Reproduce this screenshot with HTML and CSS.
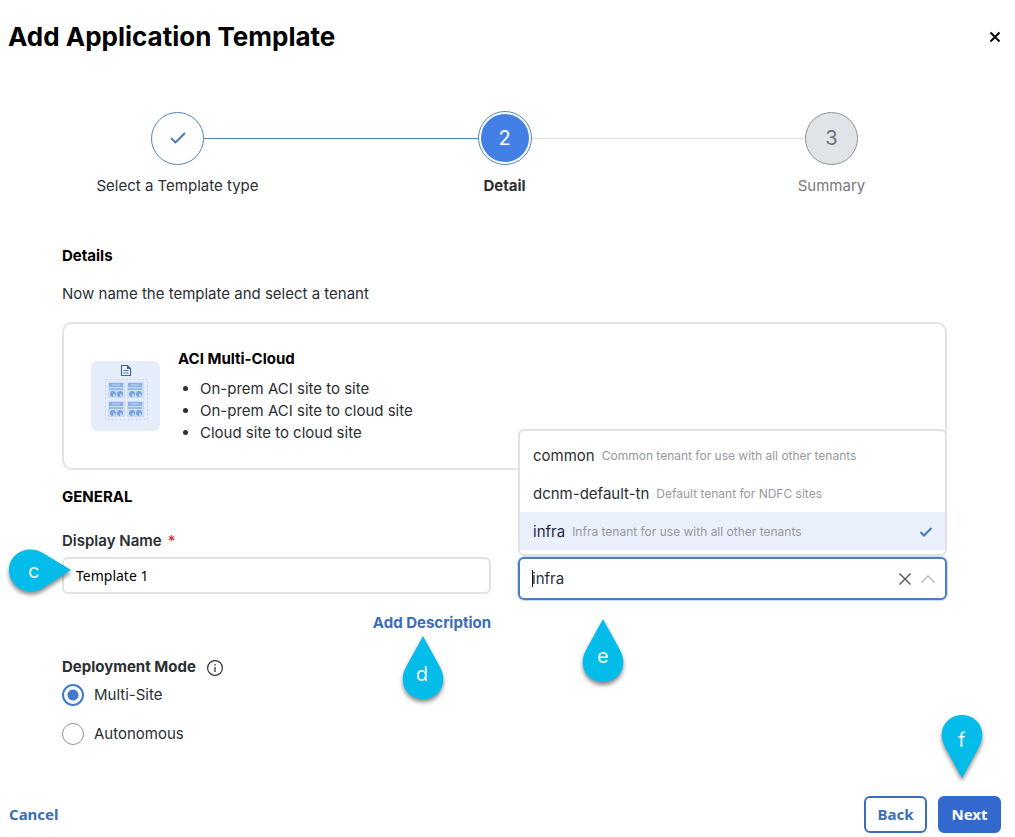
FILE: index.html
```html
<!DOCTYPE html>
<html lang="en">
<head>
<meta charset="utf-8">
<meta name="viewport" content="width=device-width, initial-scale=1">
<title>Add Application Template</title>
<link rel="stylesheet" href="styles.css">
</head>
<body class="page">
<header class="header">
  <h1 class="title">Add Application Template</h1>
  <button class="icon-button" type="button" aria-label="Close">
    <svg width="12" height="12" viewBox="0 0 12 12"><path d="M1.500 1.500l9 9M10.500 1.500l-9 9" stroke="#000" stroke-width="2" fill="none"/></svg>
  </button>
</header>

<ol class="stepper">
  <li class="step step-done">
    <div class="marker-row"><span class="marker"><svg width="18" height="14" viewBox="0 0 18 14"><path d="M2 7l4.500 4.500L16 2" stroke="#4376bd" stroke-width="1.800" fill="none"/></svg></span></div>
    <span class="step-label">Select a Template type</span>
  </li>
  <li class="step step-active" aria-current="step">
    <div class="marker-row"><span class="marker"><span class="marker-fill">2</span></span></div>
    <span class="step-label">Detail</span>
  </li>
  <li class="step step-next">
    <div class="marker-row"><span class="marker">3</span></div>
    <span class="step-label">Summary</span>
  </li>
</ol>

<main class="content">
  <h2 class="heading">Details</h2>
  <p class="intro">Now name the template and select a tenant</p>

  <section class="card">
    <svg class="card-art" width="69" height="70" viewBox="0 0 69 70" aria-hidden="true">
      <defs>
        <g id="rack">
          <rect width="17" height="16" fill="#cbdcf5"/>
          <rect x="1" y="1" width="14" height="4" fill="#8db0e5"/>
          <path d="M4 3h8" stroke="#c0d5f4"/>
          <rect x="1" y="6" width="14" height="2" fill="#9bbbea"/>
          <circle cx="5" cy="12" r="3" fill="#7ba2dc"/>
          <circle cx="12" cy="12" r="3" fill="#7ba2dc"/>
          <path d="M5 12h2v3H5zM12 12h2v3h-2z" fill="#b7cff1"/>
        </g>
      </defs>
      <rect width="69" height="70" rx="7" fill="#e5edfa"/>
      <rect x="14.500" y="18.500" width="42" height="40" fill="none" stroke="#c6d4eb" stroke-dasharray="2 2"/>
      <use href="#rack" x="17" y="21"/><use href="#rack" x="36" y="21"/>
      <use href="#rack" x="17" y="40"/><use href="#rack" x="36" y="40"/>
      <path d="M30.500 4.500h6l3 3v7h-9zM36.500 4.500v3h3" fill="#eef4fd" stroke="#41669d" stroke-width="1.200"/>
      <path d="M32.500 9.500h5M32.500 12h5" stroke="#41669d" stroke-width="1.200"/>
    </svg>
    <div class="card-body">
      <h3 class="card-title">ACI Multi-Cloud</h3>
      <ul class="card-list">
        <li>On-prem ACI site to site</li>
        <li>On-prem ACI site to cloud site</li>
        <li>Cloud site to cloud site</li>
      </ul>
    </div>
  </section>

  <h2 class="heading heading-general">GENERAL</h2>

  <form class="form">
    <div class="field">
      <label class="label" for="display-name">Display Name <span class="required">*</span></label>
      <div class="input-wrap">
        <input class="text-input" id="display-name" type="text" value="Template 1" required>
        <svg class="pin pin-c" width="72" height="54" viewBox="0 0 72 54"><path d="M65 22L37 5C22-4 3 5 3 22s19 27 34 18z" fill="#04bce9"/><text x="28" y="30" text-anchor="middle">c</text></svg>
      </div>
      <div class="link-wrap">
        <a class="link" href="#description">Add Description</a>
        <svg class="pin pin-d" width="54" height="72" viewBox="0 0 54 72"><use href="#drop"/><text x="26" y="47" text-anchor="middle">d</text></svg>
      </div>
    </div>

    <div class="field field-tenant">
      <div class="combo">
        <input class="combo-input" type="text" role="combobox" aria-label="Tenant" aria-expanded="true" aria-controls="tenant-list" value="infra">
        <span class="caret"></span>
        <button class="icon-button" type="button" aria-label="Clear tenant"><svg width="14" height="14" viewBox="0 0 14 14"><path d="M1.500 1.500l11 11M12.500 1.500l-11 11" stroke="#555" stroke-width="1.400" fill="none"/></svg></button>
        <button class="icon-button" type="button" aria-label="Close tenant list"><svg width="16" height="10" viewBox="0 0 16 10"><path d="M1.500 8.500L8 2l6.500 6.500" stroke="#bbb" stroke-width="1.400" fill="none"/></svg></button>
        <ul class="options" id="tenant-list" role="listbox" aria-label="Tenants">
          <li class="option" role="option" aria-selected="false">common <small class="hint">Common tenant for use with all other tenants</small></li>
          <li class="option" role="option" aria-selected="false">dcnm-default-tn <small class="hint">Default tenant for NDFC sites</small></li>
          <li class="option option-selected" role="option" aria-selected="true">infra <small class="hint">Infra tenant for use with all other tenants</small>
            <svg class="option-check" width="14" height="12" viewBox="0 0 14 12"><path d="M1.500 6l3.500 3.500L12.500 2" stroke="#3f75c6" stroke-width="2" fill="none"/></svg></li>
        </ul>
        <svg class="pin pin-e" width="54" height="72" viewBox="0 0 54 72"><path id="drop" d="M27 2L44 33C53 50 42 65 27 65S1 50 10 33z" fill="#04bce9"/><text x="27" y="46" text-anchor="middle">e</text></svg>
      </div>
    </div>

    <fieldset class="modes">
      <legend class="label mode-legend">Deployment Mode
        <svg class="info" width="18" height="18" viewBox="0 0 18 18"><circle cx="9" cy="9" r="7.400" fill="none" stroke="#333" stroke-width="1.200"/><path d="M9 8v5M9 5v1.500" stroke="#333" stroke-width="1.300"/></svg>
      </legend>
      <label class="mode"><input class="radio" type="radio" name="mode" checked>Multi-Site</label>
      <label class="mode"><input class="radio" type="radio" name="mode">Autonomous</label>
    </fieldset>
  </form>
</main>

<footer class="footer">
  <button class="button button-text" type="button">Cancel</button>
  <button class="button button-outline" type="button">Back</button>
  <div class="next-wrap">
    <button class="button button-primary" type="button">Next</button>
    <svg class="pin pin-f" width="54" height="72" viewBox="0 0 54 72"><use href="#drop" transform="matrix(1 0 0 -1 0 67)"/><text x="27" y="34" text-anchor="middle">f</text></svg>
  </div>
</footer>
</body>
</html>
```
FILE: styles.css
```css
* { box-sizing: border-box; }

.page {
  display: flex;
  flex-direction: column;
  min-height: 100vh;
  margin: 0;
  background: #fff;
  color: #2b2f33;
  font: 15px/22px Inter, "Liberation Sans", sans-serif;
}

.header {
  display: flex;
  align-items: center;
  justify-content: space-between;
  padding: 20px 14px 0 8px;
}

.title { margin: 0; color: #000; font-size: 26px; line-height: 34px; font-weight: 700; }

.icon-button {
  display: flex;
  padding: 0;
  border: 0;
  background: none;
  cursor: pointer;
}

.stepper {
  display: grid;
  grid-template-columns: repeat(3, 1fr);
  margin: 57px 20px 0 14px;
  padding: 0;
  list-style: none;
  text-align: center;
}

.marker-row { display: flex; align-items: center; height: 54px; }
.marker-row::before, .marker-row::after { content: ""; flex: 1; border-top: 1px solid transparent; }
.step-done .marker-row::after, .step-active .marker-row::before { border-color: #5283bd; }
.step-active .marker-row::after, .step-next .marker-row::before { border-color: #dedfe1; }

.marker {
  display: flex;
  align-items: center;
  justify-content: center;
  width: 53px;
  height: 53px;
  border: 1px solid #5283bd;
  border-radius: 50%;
  font-size: 20px;
}
.step-active .marker { width: 54px; height: 54px; }
.marker-fill { width: 48px; border-radius: 50%; background: #437fe4; color: #fff; line-height: 48px; }
.step-next .marker { border-color: #919295; background: #e0e3e8; color: #6f7276; }
.step-label { display: block; margin-top: 10px; }
.step-active .step-label { font-weight: 700; }
.step-next .step-label { color: #777a7e; }

.content { padding: 47px 68px 24px 62px; }
.heading, .card-title { margin: 0; color: #000; font-size: 15px; line-height: 24px; font-weight: 700; }
.heading-general { margin-top: 15px; }
.intro { margin: 14px 0 16px; line-height: 24px; }

.card {
  display: flex;
  align-items: center;
  gap: 18px;
  padding: 24px 27px;
  border: 2px solid #e2e3e6;
  border-radius: 10px;
}
.card-title { line-height: 22px; }
.card-list { margin: 8px 0 0; padding-left: 22px; }

.form {
  display: grid;
  grid-template-columns: 1fr 1fr;
  column-gap: 27px;
  margin-top: 21px;
}
.label { display: block; font-weight: 600; }
.required { margin-left: 2px; color: #d23b38; }
.input-wrap, .link-wrap, .combo, .next-wrap { position: relative; }
.input-wrap { margin-top: 5px; }
.field-tenant { padding-top: 27px; }

.text-input {
  display: block;
  width: 100%;
  height: 37px;
  padding: 0 12px;
  border: 2px solid #e1e2e4;
  border-radius: 6px;
  color: #000;
  font: 14px "Noto Sans", sans-serif;
}

.link-wrap { width: max-content; margin: 18px 0 0 auto; }
.link { display: block; color: #3a6dba; font-weight: 700; text-decoration: none; }

.combo {
  display: flex;
  align-items: center;
  gap: 8px;
  height: 43px;
  padding: 0 9px 0 12px;
  border: 2px solid #4f7ebd;
  border-radius: 6px;
  box-shadow: 0 0 0 1px #c9dcf7;
}
.combo-input {
  flex: 1;
  min-width: 0;
  padding: 0;
  border: 0;
  outline: 0;
  background: none;
  color: #2b2f33;
  font: inherit;
}
.caret { position: absolute; left: 12px; top: 11px; width: 1px; height: 17px; background: #111; }

.options {
  position: absolute;
  left: -2px;
  right: -2px;
  bottom: 42px;
  margin: 0;
  padding: 5px 0 4px;
  border: 2px solid #e1e2e5;
  border-radius: 6px;
  background: #fff;
  list-style: none;
}
.option { display: flex; align-items: center; gap: 7px; padding: 9px 12px 7px 13px; }
.option-selected { background: #ebf1fc; color: #1d2b42; }
.hint { color: #96999d; font-size: 12px; }
.option-check { margin-left: auto; }

.modes { grid-column: 1 / -1; margin: 22px 0 0; padding: 0; border: 0; }
.mode-legend { display: flex; align-items: center; gap: 10px; padding: 0; font-weight: 700; }
.info { margin-top: 2px; }
.mode { display: flex; align-items: center; gap: 10px; width: max-content; margin-top: 6px; }
.mode + .mode { margin-top: 17px; }
.radio {
  appearance: none;
  width: 22px;
  height: 22px;
  margin: 0;
  border: 1px solid #929497;
  border-radius: 50%;
}
.radio:checked { border: 2px solid #437ad0; background: radial-gradient(circle, #437ad0 5px, #fff 6px); }

.footer { display: flex; align-items: center; gap: 11px; margin-top: auto; padding: 0 14px 4px 9px; }
.button {
  height: 37px;
  min-width: 63px;
  padding: 0 10px 2px;
  border: 2px solid #3a6dba;
  border-radius: 6px;
  background: #fff;
  color: #3a6dba;
  font: 700 15px "Noto Sans", sans-serif;
  cursor: pointer;
}
.button-text { min-width: 0; margin-right: auto; padding: 0 0 2px; border: 0; }
.button-primary { border-color: #3369cf; background: #3369cf; color: #fff; }

.pin { position: absolute; filter: drop-shadow(0 3px 2px #0007); pointer-events: none; }
.pin text { fill: #fff; font-size: 20px; }
.pin-c { left: -56px; top: -9px; }
.pin-d { left: 23px; bottom: -72px; }
.pin-e { left: 56px; top: 58px; }
.pin-f { right: 12px; bottom: 48px; }
```
